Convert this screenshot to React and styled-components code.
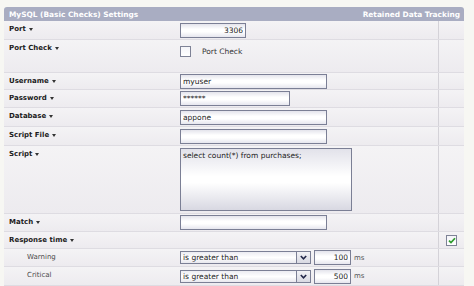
import React from "react";
import styled, { createGlobalStyle } from "styled-components";

const GlobalStyle = createGlobalStyle`
  html, body {
    margin: 0;
    padding: 0;
    background: #f7f7f3;
    font-family: "DejaVu Sans", Verdana, sans-serif;
    overflow: hidden;
  }
`;

const Page = styled.div`
  padding: 7px 10px 0 4px;
`;

const Panel = styled.div`
  width: 460px;
`;

const Header = styled.div`
  height: 14px;
  background: #a9adc2;
  border-radius: 3px 3px 0 0;
  display: flex;
  align-items: center;
  justify-content: space-between;
  padding: 0 4px 0 5px;
  color: #ffffff;
  font-weight: bold;
  font-size: 7.4px;
`;

const Row = styled.div`
  display: grid;
  grid-template-columns: 176px 1fr 26px;
  height: ${(p) => p.h}px;
  box-sizing: border-box;
  border-bottom: 1px solid #dedce2;
  background: linear-gradient(#f4f3f5, #edebef);
`;

const Label = styled.div`
  padding: ${(p) => (p.sub ? "3px 0 0 23px" : "3px 0 0 5px")};
  font-size: 7px;
  line-height: 10px;
  font-weight: ${(p) => (p.sub ? "normal" : "bold")};
  color: ${(p) => (p.sub ? "#4a4a4a" : "#1c1c1c")};
  display: flex;
  align-items: flex-start;
  gap: 3px;
`;

const Caret = styled.span`
  display: inline-block;
  margin-top: 4px;
  width: 0;
  height: 0;
  border-left: 2px solid transparent;
  border-right: 2px solid transparent;
  border-top: 3px solid #333;
`;

const Field = styled.div`
  display: flex;
  align-items: ${(p) => (p.top ? "flex-start" : "center")};
  padding-top: ${(p) => (p.top ? "6px" : "0")};
  gap: 3px;
`;

const Track = styled.div`
  border-left: 1px solid #d4d2d8;
  display: flex;
  align-items: center;
  justify-content: center;
`;

const inputLook = `
  box-sizing: border-box;
  border: 1px solid #7b7f95;
  background: linear-gradient(#e4e4ec 0%, #ffffff 40%, #ffffff 60%, #e6e6ee 100%);
  font-family: "DejaVu Sans", Verdana, sans-serif;
  font-size: 7.5px;
  color: #222;
  padding: 0 2px;
  outline: none;
  margin: 0;
`;

const TextInput = styled.input`
  ${inputLook}
  display: block;
  width: ${(p) => p.w}px;
  height: 15px;
  text-align: ${(p) => (p.right ? "right" : "left")};
`;

const ScriptArea = styled.textarea`
  ${inputLook}
  display: block;
  width: 172px;
  height: 63px;
  resize: none;
  padding: 2px;
  line-height: 10px;
  background: linear-gradient(#e2e2ea 0%, #ffffff 45%, #ffffff 55%, #d8d8e2 100%);
`;

const Check = styled.span`
  width: 11px;
  height: 11px;
  box-sizing: border-box;
  border: 1px solid #7e8296;
  background: linear-gradient(#f4f4f8, #ffffff);
  display: inline-flex;
  align-items: center;
  justify-content: center;
`;

const CheckText = styled.span`
  font-size: 7.5px;
  color: #333;
  margin-left: 8px;
  line-height: 11px;
`;

const SelectWrap = styled.div`
  position: relative;
  width: 131px;
  height: 13px;
`;

const Select = styled.select`
  ${inputLook}
  display: block;
  appearance: none;
  width: 100%;
  height: 100%;
  padding: 0 2px;
  background: linear-gradient(#ececf2, #ffffff 50%, #e8e8ee);
`;

const SelectArrow = styled.span`
  position: absolute;
  top: 0;
  right: 0;
  width: 15px;
  height: 13px;
  box-sizing: border-box;
  border: 1px solid #7b7f95;
  background: linear-gradient(#f2f2f6, #d8d9e2);
  display: flex;
  align-items: center;
  justify-content: center;
  pointer-events: none;
`;

const Unit = styled.span`
  font-size: 7px;
  color: #555;
`;

const Chevron = () => (
  <svg width="7" height="5" viewBox="0 0 7 5">
    <path d="M0.8 1 L3.5 3.8 L6.2 1" fill="none" stroke="#23284a" strokeWidth="1.6" />
  </svg>
);

const Tick = () => (
  <svg width="8" height="7" viewBox="0 0 8 7">
    <path d="M1 3.6 L3 5.6 L7 1.2" fill="none" stroke="#2e9b2e" strokeWidth="1.7" />
  </svg>
);

const Lbl = ({ children, sub }) => (
  <Label sub={sub}>
    {children}
    {!sub && <Caret />}
  </Label>
);

const Threshold = ({ name, value, h }) => (
  <Row h={h}>
    <Lbl sub>{name}</Lbl>
    <Field>
      <SelectWrap>
        <Select defaultValue="gt">
          <option value="gt">is greater than</option>
          <option value="lt">is less than</option>
        </Select>
        <SelectArrow>
          <Chevron />
        </SelectArrow>
      </SelectWrap>
      <TextInput w={37} right defaultValue={value} />
      <Unit>ms</Unit>
    </Field>
    <Track />
  </Row>
);

export default function App() {
  return (
    <Page>
      <GlobalStyle />
      <Panel>
        <Header>
          <span>MySQL (Basic Checks) Settings</span>
          <span>Retained Data Tracking</span>
        </Header>
        <Row h={19}>
          <Lbl>Port</Lbl>
          <Field>
            <TextInput w={66} right defaultValue="3306" />
          </Field>
          <Track />
        </Row>
        <Row h={33}>
          <Lbl>Port Check</Lbl>
          <Field top>
            <Check />
            <CheckText>Port Check</CheckText>
          </Field>
          <Track />
        </Row>
        <Row h={17}>
          <Lbl>Username</Lbl>
          <Field>
            <TextInput w={147} defaultValue="myuser" />
          </Field>
          <Track />
        </Row>
        <Row h={18}>
          <Lbl>Password</Lbl>
          <Field>
            <TextInput w={110} defaultValue="******" />
          </Field>
          <Track />
        </Row>
        <Row h={19}>
          <Lbl>Database</Lbl>
          <Field>
            <TextInput w={147} defaultValue="appone" />
          </Field>
          <Track />
        </Row>
        <Row h={19}>
          <Lbl>Script File</Lbl>
          <Field>
            <TextInput w={147} defaultValue="" />
          </Field>
          <Track />
        </Row>
        <Row h={68}>
          <Lbl>Script</Lbl>
          <Field>
            <ScriptArea defaultValue="select count(*) from purchases;" />
          </Field>
          <Track />
        </Row>
        <Row h={18}>
          <Lbl>Match</Lbl>
          <Field>
            <TextInput w={147} defaultValue="" />
          </Field>
          <Track />
        </Row>
        <Row h={17}>
          <Lbl>Response time</Lbl>
          <Field />
          <Track>
            <Check>
              <Tick />
            </Check>
          </Track>
        </Row>
        <Threshold name="Warning" value="100" h={18} />
        <Threshold name="Critical" value="500" h={19} />
      </Panel>
    </Page>
  );
}
